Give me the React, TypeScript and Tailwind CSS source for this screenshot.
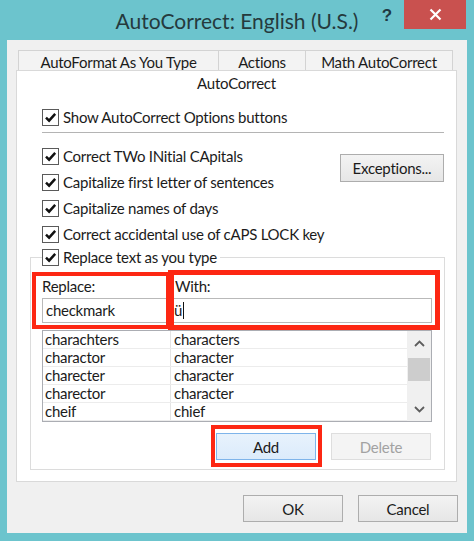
import React from "react";

const words = [
  ["charachters", "characters"],
  ["charactor", "character"],
  ["charecter", "character"],
  ["charector", "character"],
  ["cheif", "chief"],
];

function Check({ label }: { label: string }) {
  return (
    <div className="flex items-center h-[26px] whitespace-nowrap">
      <span className="w-[17px] h-[17px] shrink-0 border border-[#5a5a5a] bg-white flex items-center justify-center">
        <svg width="13" height="13" viewBox="0 0 13 13">
          <path d="M2 6.6 L5.1 9.6 L11.2 2.9" fill="none" stroke="#111" strokeWidth="2.5" />
        </svg>
      </span>
      <span className="ml-[4px] leading-[20px]">{label}</span>
    </div>
  );
}

function Btn({ children, className = "" }: { children: React.ReactNode; className?: string }) {
  return (
    <div
      className={
        "w-[100px] h-[27px] shrink-0 border flex items-center justify-center leading-[20px] " + className
      }
    >
      {children}
    </div>
  );
}

export default function App() {
  return (
    <div className="w-[474px] h-[541px] bg-[#6cc4cd] [font-family:Lato,sans-serif] text-[15px] tracking-[-0.25px] text-[#1b1b1b] overflow-hidden">
      {/* title bar */}
      <div className="relative h-[40px] flex items-center justify-center">
        <span className="text-[21px] tracking-normal text-[#253a3d] mt-[1px]">AutoCorrect: English (U.S.)</span>
        <div className="absolute right-[8px] top-0 flex items-start">
          <span className="mt-[3px] mr-[12px] text-[17px] font-bold text-[#1f3a44] [font-family:'Liberation_Sans',sans-serif]">
            ?
          </span>
          <div className="w-[62px] h-[29px] bg-[#c9514f] flex items-center justify-center">
            <svg width="13" height="13" viewBox="0 0 13 13">
              <path d="M1.5 1.5 L11.5 11.5 M11.5 1.5 L1.5 11.5" stroke="#fff" strokeWidth="2.2" />
            </svg>
          </div>
        </div>
      </div>

      {/* dialog body */}
      <div className="mx-[7px] h-[493px] bg-[#f0f0f0] px-[9px] pt-[10px]">
        <div className="flex ml-[2px] h-[20px]">
          <div className="w-[201px] border border-b-0 border-[#d3d3d3] bg-[#f3f3f3] flex items-end justify-center leading-[20px] -mb-[2px]">
            AutoFormat As You Type
          </div>
          <div className="w-[87px] border border-l-0 border-b-0 border-[#d3d3d3] bg-[#f3f3f3] flex items-end justify-center leading-[20px] -mb-[2px]">
            Actions
          </div>
          <div className="w-[147px] border border-l-0 border-b-0 border-[#d3d3d3] bg-[#f3f3f3] flex items-end justify-center leading-[20px] -mb-[2px]">
            Math AutoCorrect
          </div>
        </div>

        <div className="relative w-[441px] h-[412px] bg-white border border-[#d9d9d9]">
          <div className="h-[24px] flex items-center justify-center">AutoCorrect</div>

          <div className="pl-[25px] mt-[9px]">
            <Check label="Show AutoCorrect Options buttons" />
          </div>
          <div className="ml-[25px] mt-[2px] w-[402px] h-px bg-[#b4b4b4]" />

          <div className="flex justify-between pl-[25px] pr-[12px] mt-[10px]">
            <div>
              <Check label="Correct TWo INitial CApitals" />
              <Check label="Capitalize first letter of sentences" />
              <Check label="Capitalize names of days" />
              <Check label="Correct accidental use of cAPS LOCK key" />
            </div>
            <div className="mt-[11px] w-[104px] shrink-0 h-[28px] border border-[#adadad] bg-gradient-to-b from-[#f3f3f3] to-[#e6e6e6] flex items-center justify-center">
              Exceptions...
            </div>
          </div>

          <fieldset className="ml-[13px] w-[415px] border border-[#dcdcdc] pl-[11px] pr-[12px] pb-[9px]">
            <legend className="pr-[3px] bg-white">
              <div className="h-[20px] flex items-center whitespace-nowrap">
                <span className="w-[17px] h-[17px] border border-[#5a5a5a] bg-white flex items-center justify-center">
                  <svg width="13" height="13" viewBox="0 0 13 13">
                    <path d="M2 6.6 L5.1 9.6 L11.2 2.9" fill="none" stroke="#111" strokeWidth="2.5" />
                  </svg>
                </span>
                <span className="ml-[4px] leading-[20px]">Replace text as you type</span>
              </div>
            </legend>

            <div className="flex gap-[4px] mt-[10px]">
              <div className="relative w-[126px]">
                <div className="h-[18px] leading-[18px]">Replace:</div>
                <div className="mt-[3px] h-[25px] border border-[#b9b9b9] bg-white flex items-center pl-[3px]">
                  checkmark
                </div>
                <div className="absolute -left-[10px] -right-[2px] -top-[5px] -bottom-[6px] border-4 border-[#fd2713]" />
              </div>
              <div className="relative w-[260px]">
                <div className="h-[18px] leading-[18px] pl-[3px]">With:</div>
                <div className="mt-[3px] h-[25px] border border-[#b9b9b9] bg-white flex items-center pl-[1px]">
                  ü<span className="ml-px w-px h-[17px] bg-[#111]" />
                </div>
                <div className="absolute -left-[4px] -right-[8px] -top-[7px] -bottom-[7px] border-[5px] border-l-[6px] border-[#fd2713]" />
              </div>
            </div>

            <div className="mt-[7px] h-[92px] border border-[#abadb3] flex bg-white">
              <div className="flex-1">
                {words.map(([a, b]) => (
                  <div key={a} className="flex h-[18px] leading-[17px] border-b border-[#ececec]">
                    <div className="w-[128px] pl-[2px] border-r border-[#e4e4e4]">{a}</div>
                    <div className="pl-[3px]">{b}</div>
                  </div>
                ))}
              </div>
              <div className="w-[24px] bg-[#f0f0f0] flex flex-col items-center">
                <div className="h-[24px] flex items-center justify-center">
                  <svg width="11" height="7" viewBox="0 0 11 7">
                    <path d="M1 6 L5.5 1.5 L10 6" fill="none" stroke="#5d5d5d" strokeWidth="1.8" />
                  </svg>
                </div>
                <div className="mt-[3px] w-[22px] h-[23px] bg-[#cdcdcd]" />
                <div className="flex-1" />
                <div className="h-[24px] flex items-center justify-center">
                  <svg width="11" height="7" viewBox="0 0 11 7">
                    <path d="M1 1 L5.5 5.5 L10 1" fill="none" stroke="#5d5d5d" strokeWidth="1.8" />
                  </svg>
                </div>
              </div>
            </div>

            <div className="mt-[11px] flex justify-end gap-[15px] pr-px">
              <div className="relative">
                <Btn className="border-[#7eb4ea] bg-gradient-to-b from-[#e8f2fc] to-[#dbebfb]">Add</Btn>
                <div className="absolute -left-[5px] -right-[6px] -top-[8px] -bottom-[7px] border-4 border-[#fd2713]" />
              </div>
              <Btn className="border-[#dedede] bg-[#f4f4f4] text-[#a2a2a2]">Delete</Btn>
            </div>
          </fieldset>
        </div>

        <div className="mt-[13px] flex justify-end gap-[15px]">
          <Btn className="border-[#adadad] bg-gradient-to-b from-[#f3f3f3] to-[#e6e6e6]">OK</Btn>
          <Btn className="border-[#adadad] bg-gradient-to-b from-[#f3f3f3] to-[#e6e6e6]">Cancel</Btn>
        </div>
      </div>
    </div>
  );
}
